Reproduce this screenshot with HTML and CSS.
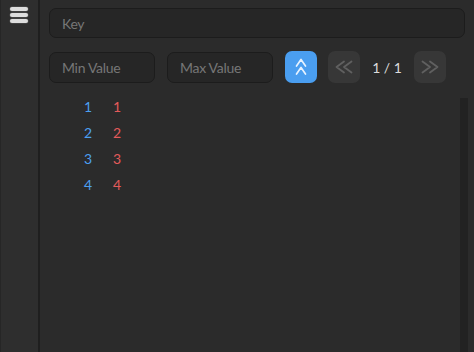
FILE: index.html
```html
<!DOCTYPE html>
<html>
<head>
<meta charset="utf-8">
<link rel="stylesheet" href="styles.css">
</head>
<body>
<div class="app">
  <aside class="sidebar">
    <div class="menu">
      <span class="bar"></span>
      <span class="bar"></span>
      <span class="bar"></span>
    </div>
  </aside>
  <main class="main">
    <div class="controls">
      <div class="field key">Key</div>
      <div class="row">
        <div class="field range">Min Value</div>
        <div class="field range">Max Value</div>
        <button class="btn primary">
          <svg width="14" height="22" viewBox="0 0 14 22"><path d="M2.5 10 L7 3.5 L11.5 10 M2.5 18 L7 11.5 L11.5 18" fill="none" stroke="#e6f2ff" stroke-width="1.7" stroke-linecap="round" stroke-linejoin="round"/></svg>
        </button>
        <button class="btn nav">
          <svg width="20" height="14" viewBox="0 0 20 14"><path d="M10 1.5 L2.5 7 L10 12.5 M17.5 1.5 L10 7 L17.5 12.5" fill="none" stroke="#606060" stroke-width="1.8" stroke-linecap="round" stroke-linejoin="round"/></svg>
        </button>
        <span class="pages">1 / 1</span>
        <button class="btn nav">
          <svg width="20" height="14" viewBox="0 0 20 14"><path d="M2.5 1.5 L10 7 L2.5 12.5 M10 1.5 L17.5 7 L10 12.5" fill="none" stroke="#606060" stroke-width="1.8" stroke-linecap="round" stroke-linejoin="round"/></svg>
        </button>
      </div>
    </div>
    <div class="body">
      <div class="list">
        <span class="k">1</span><span class="v">1</span>
        <span class="k">2</span><span class="v">2</span>
        <span class="k">3</span><span class="v">3</span>
        <span class="k">4</span><span class="v">4</span>
      </div>
      <div class="scroll"></div>
    </div>
  </main>
</div>
</body>
</html>
```
FILE: styles.css
```css
html, body {
  margin: 0;
  height: 100%;
  background: #2b2b2b;
  font-family: Lato, "Noto Sans", sans-serif;
  font-size: 14px;
}
.app {
  display: flex;
  height: 352px;
}
.sidebar {
  width: 38px;
  background: #2e2e2e;
  border-right: 2px solid #1f1f1f;
  box-shadow: inset 6px 0 0 -5px #262626;
  display: flex;
  justify-content: center;
  padding-top: 7px;
  box-sizing: content-box;
}
.menu {
  display: flex;
  flex-direction: column;
  gap: 2px;
  width: 18px;
}
.bar {
  display: block;
  height: 4px;
  border-radius: 2px;
  background: #dedede;
  box-shadow: 0 0 0 0.5px #555;
}
.main {
  flex: 1;
  display: flex;
  flex-direction: column;
  min-width: 0;
}
.controls {
  padding: 8px 9px 0 9px;
  display: flex;
  flex-direction: column;
  gap: 13px;
}
.field {
  box-sizing: border-box;
  background: #262626;
  border: 1px solid #1c1c1c;
  border-radius: 7px;
  color: #767676;
  padding: 0 12px;
  display: flex;
  align-items: center;
  letter-spacing: -0.3px;
}
.key {
  height: 30px;
}
.row {
  display: flex;
  align-items: center;
  height: 32px;
}
.range {
  width: 106px;
  height: 31px;
  margin-right: 12px;
}
.btn {
  box-sizing: border-box;
  width: 32px;
  height: 32px;
  border: none;
  border-radius: 7px;
  padding: 0;
  display: flex;
  align-items: center;
  justify-content: center;
}
.primary {
  background: #4a9ef0;
  margin-right: 11px;
}
.nav {
  background: #373737;
}
.pages {
  width: 54px;
  text-align: center;
  color: #dcdcdc;
  font-size: 14px;
}
.body {
  flex: 1;
  display: flex;
  min-height: 0;
}
.list {
  flex: 1;
  display: grid;
  grid-template-columns: 29px 20px;
  grid-auto-rows: 26px;
  align-content: start;
  padding: 11px 0 0 44px;
}
.k, .v {
  line-height: 26px;
  font-size: 14px;
}
.k { color: #4b9ff0; }
.v { color: #e35a5a; }
.scroll {
  width: 8px;
  margin: 15px 6px 0 0;
  background: #222222;
}
```
